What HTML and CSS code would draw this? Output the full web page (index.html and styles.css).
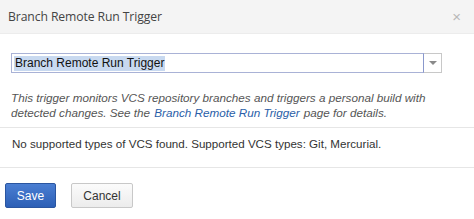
FILE: index.html
```html
<!DOCTYPE html>
<html>
<head>
<meta charset="utf-8">
<link rel="stylesheet" href="styles.css">
</head>
<body>
<div class="dialog">
  <div class="header">
    <span class="title">Branch Remote Run Trigger</span>
    <span class="close">&#215;</span>
  </div>
  <div class="content">
    <div class="select">
      <div class="select-field"><span class="selected">Branch Remote Run Trigger</span></div>
      <div class="select-arrow"><span class="tri"></span></div>
    </div>
    <p class="desc">This trigger monitors VCS repository branches and triggers a personal build with detected changes. See the <a class="link">Branch Remote Run Trigger</a> page for details.</p>
  </div>
  <div class="section">No supported types of VCS found. Supported VCS types: Git, Mercurial.</div>
  <div class="buttons">
    <button class="btn btn-primary">Save</button>
    <button class="btn btn-default">Cancel</button>
  </div>
</div>
</body>
</html>
```
FILE: styles.css
```css
html, body {
  margin: 0;
  padding: 0;
  background: #fff;
}
.dialog {
  width: 474px;
  height: 219px;
  font-family: "Liberation Sans", Arial, sans-serif;
  color: #333;
}
.header {
  height: 33px;
  background: #f4f4f4;
  border-bottom: 1px solid #ececec;
  display: flex;
  align-items: center;
  justify-content: space-between;
  padding: 0 13px 0 8px;
}
.title {
  font-family: "Open Sans", "Noto Sans", sans-serif;
  font-size: 12.2px;
  color: #444;
  letter-spacing: -0.1px;
}
.close {
  font-size: 15px;
  color: #b8b8b8;
  line-height: 1;
}
.content {
  padding: 19px 11px 0 11px;
  width: 452px;
  border-bottom: 1px solid #e6e6e6;
}
.select {
  display: flex;
  width: 431px;
  height: 20px;
}
.select-field {
  flex: 1;
  border: 1px solid #a9b2d6;
  border-right: 1px solid #8a98cc;
  display: flex;
  align-items: center;
  padding-left: 2px;
}
.selected {
  background: #c8d9f0;
  font-size: 12px;
  line-height: 15px;
  color: #111;
  padding: 0 1px;
}
.select-arrow {
  width: 17px;
  border: 1px solid #c8c8c8;
  border-left: none;
  display: flex;
  align-items: center;
  justify-content: center;
}
.tri {
  width: 0;
  height: 0;
  border-left: 4px solid transparent;
  border-right: 4px solid transparent;
  border-top: 4px solid #8a8a8a;
}
.desc {
  margin: 17px 0 0 0;
  padding-bottom: 7px;
  font-size: 11.7px;
  line-height: 15px;
  font-style: italic;
  color: #555;
}
.link {
  color: #2a5ea8;
  padding: 0 1px;
}
.section {
  padding: 0 12px;
  width: 450px;
  height: 39px;
  line-height: 32px;
  font-size: 11.6px;
  color: #333;
  border-bottom: 1px solid #e6e6e6;
}
.buttons {
  display: flex;
  gap: 15px;
  padding: 15px 0 0 5px;
}
.btn {
  font-family: "Liberation Sans", Arial, sans-serif;
  font-size: 12px;
  height: 25px;
  border-radius: 2px;
  padding: 0;
  cursor: pointer;
}
.btn-primary {
  width: 51px;
  color: #fff;
  background: linear-gradient(#4a7ed2, #2c5fb6);
  border: 1px solid #2a55a0;
}
.btn-default {
  width: 62px;
  color: #333;
  background: linear-gradient(#fbfbfb, #ececec);
  border: 1px solid #c8c8c8;
}
```
